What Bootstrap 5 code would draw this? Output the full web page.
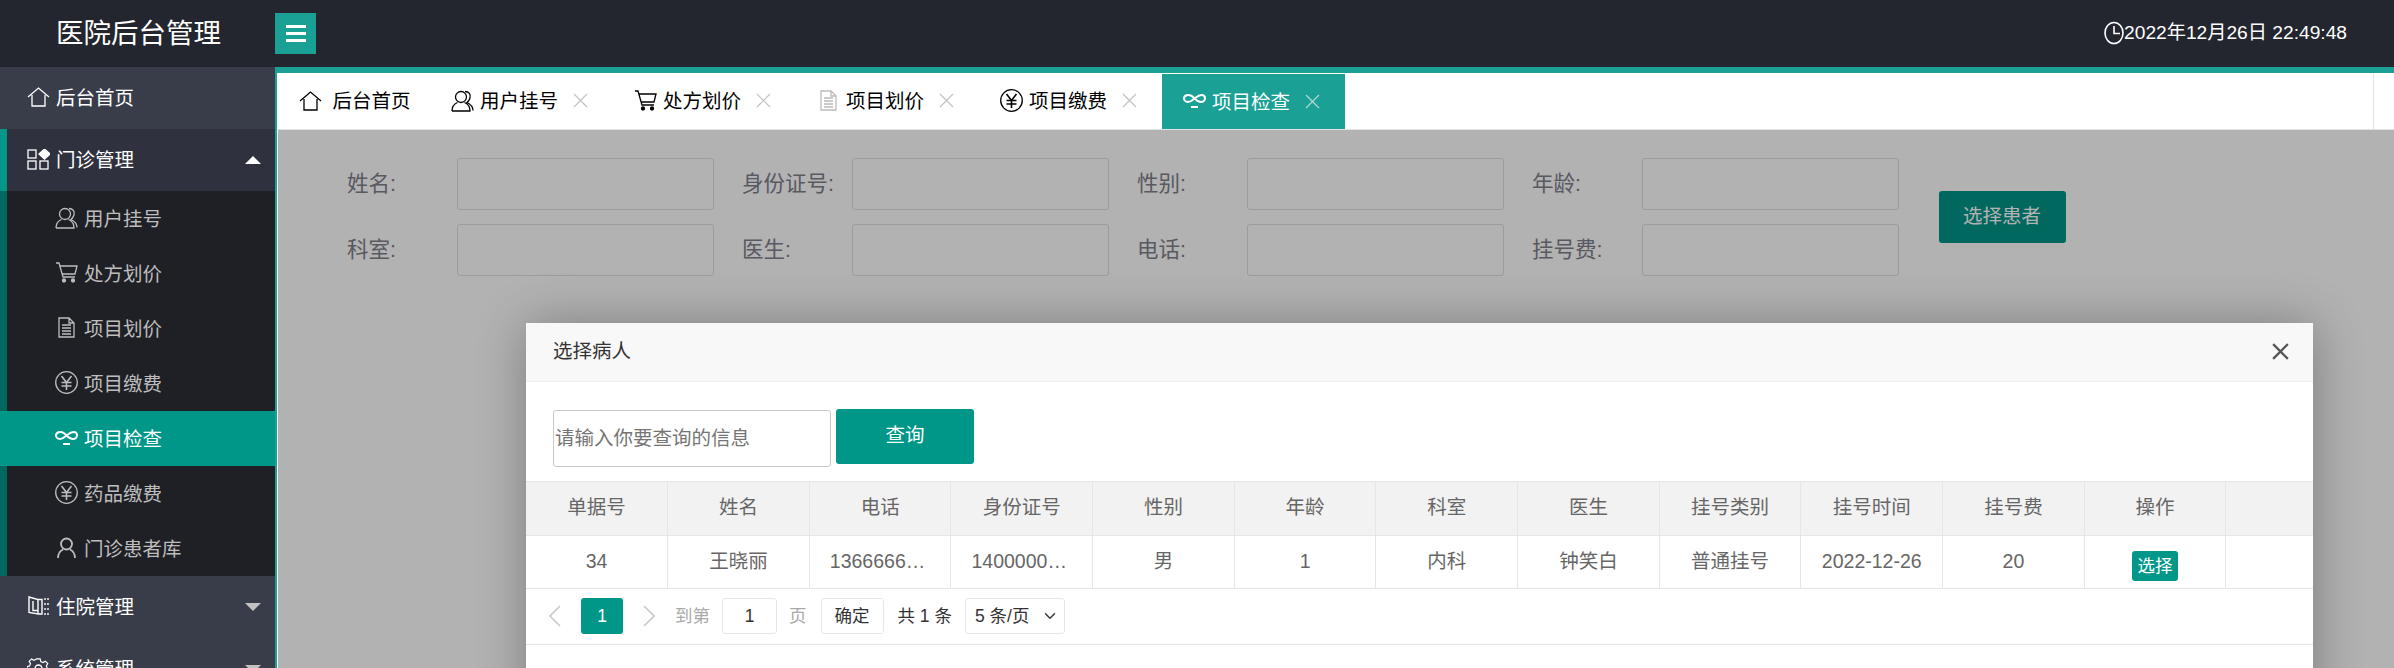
<!DOCTYPE html>
<html lang="zh">
<head>
<meta charset="utf-8">
<title>医院后台管理</title>
<link href="https://cdn.jsdelivr.net/npm/bootstrap@5.3.0/dist/css/bootstrap.min.css" rel="stylesheet">
<style>
html,body{height:100%;overflow:hidden;}
body{font-family:"Liberation Sans","Noto Sans CJK SC",sans-serif;font-size:19.5px;color:#333;background:#fff;}
svg{display:block;flex:none;fill:none;stroke:currentColor;stroke-width:1.3;}
.topbar{height:67px;background:#23262e;color:#fff;}
.brand{width:275px;padding-left:56px;font-size:27.5px;line-height:1;}
.burger{width:41px;height:41px;background:#1aa094;}
.burger span{display:block;width:20px;height:3px;background:#fff;}
.clock{padding-right:47px;font-size:19.2px;}
.shell{height:601px;}
.side{width:275px;background:#393d49;overflow:hidden;color:#fff;}
.side-top{flex:none;height:62px;padding-left:27px;padding-top:2px;color:#fff;}
.side-top svg{margin-right:6px;margin-bottom:4px;}
.side-open{background:#2f323e;border-left:7px solid #009688;padding-left:20px;}
.caret-mark{width:0;height:0;border-left:8px solid transparent;border-right:8px solid transparent;margin-left:auto;margin-right:14px;margin-bottom:2px;}
.caret-up{border-bottom:8px solid #fff;}
.caret-down{border-top:8px solid #c2c2c2;}
.side-sub{flex:none;background:#1f2026;}
.sub-row{height:55px;padding-left:48px;padding-top:2px;border-left:7px solid #00695f;color:#bdbdbd;}
.sub-row svg{margin-right:6px;margin-bottom:4px;}
.sub-row.is-on{background:#009688;border-left-color:#009688;color:#fff;}
.work{flex:1;min-width:0;border-top:6px solid #1aa094;border-left:2px solid #1aa094;background:#fff;}
.tabbar{height:57px;border-bottom:1px solid #e2e2e2;color:#000;}
.tab-cell{height:56px;padding-left:21.5px;padding-top:2px;}
.tab-cell svg{margin-bottom:3px;}
.tab-cell svg.ti{margin-right:6px;}
.tab-home{width:152.5px;}
.tab-home svg.ti{margin-right:11px;}
.tab-item{width:183px;}
.tab-x{margin-left:15px;color:#c2c2c2;stroke-width:1.2;}
.tab-on{width:183px;margin-top:1px;height:55px;background:#1aa094;color:#fff;}
.tab-on .tab-x{color:#b4d9d5;}
.tab-doc{color:#bbb;}
.tab-end{width:21px;margin-left:auto;height:56px;border-left:1px solid #e2e2e2;}
.stage{height:538px;margin-left:1px;overflow:hidden;}
.patient-form{padding:28px 0 0 69px;}
.form-rows{display:flex;flex-direction:column;gap:14px;}
.form-line{display:flex;gap:28.5px;}
.field-pair{display:flex;align-items:center;}
.field-pair label{width:110px;font-size:21.5px;color:#80808a;padding-top:1px;}
.field-pair .form-control{width:256.500px;height:52px;border:1px solid #e0e0e0;border-radius:3px;}
.pick-btn{width:127px;height:52px;margin-left:40px;background:#009688;color:#fff;font-size:19.5px;border-radius:3px;border:0;}
.shade{position:absolute;inset:0;background:rgba(0,0,0,.3);}
.dialog{position:absolute;left:248px;top:192.500px;width:1787px;height:500px;background:#fff;border-radius:2px;box-shadow:1px 1px 50px rgba(0,0,0,.3);}
.dialog-head{height:59px;background:#f8f8f8;border-bottom:1px solid #eee;padding:0 24px 0 27px;color:#333;}
.dialog-close{color:#555;stroke-width:2;}
.search-row{padding:27px 0 17px 27px;height:99px;gap:5px;}
.search-input{width:278px;height:57px;padding:0 1px;margin-top:1px;border:1px solid #c9c9c9;border-radius:3px;font-size:19.5px;}
.search-input::placeholder{color:#757575;}
.search-btn{width:138px;height:55px;background:#009688;color:#fff;font-size:19.5px;border:0;border-radius:3px;}
.grid-table{table-layout:fixed;width:1787px;margin:0;border-color:#e6e6e6;color:#666;font-size:19.5px;}
.grid-table th,.grid-table td{text-align:center;vertical-align:middle;padding:0 20px;font-weight:400;white-space:nowrap;overflow:hidden;text-overflow:ellipsis;border:1px solid #e6e6e6;color:#666;}
.grid-table tr>*:first-child{border-left:0;}
.grid-table tr>*:last-child{border-right:0;}
.grid-table th{height:54px;background:#f2f2f2;}
.grid-table td{height:53px;}
.pick-mini{display:inline-block;width:46px;height:30px;line-height:30px;margin-top:8px;background:#009688;color:#fff;font-size:17.5px;border-radius:3px;padding:0;border:0;}
.pager{height:56px;border-bottom:1px solid #e6e6e6;padding-left:23px;font-size:17.5px;color:#aaa;}
.pager svg{color:#c9c9c9;stroke-width:1.6;}
.pager-now{width:42px;height:36px;margin:0 20px;background:#009688;color:#fff;border-radius:3px;}
.pager-first{margin-left:20px;}
.pager-input{width:55px;height:36px;margin:0 12px;text-align:center;border:1px solid #e6e6e6;border-radius:3px;font-size:17.5px;color:#333;padding:0;}
.pager-ok{width:63px;height:36px;margin:0 14px;padding:0;background:#fff;border:1px solid #e6e6e6;border-radius:3px;font-size:17.5px;color:#333;}
.pager-total{color:#333;}
.pager-select{width:100px;height:36px;margin-left:13px;padding:0 0 0 9px;border:1px solid #e6e6e6;border-radius:3px;font-size:17.5px;color:#333;background-position:right 6px center;}
</style>
</head>
<body>
<svg width="0" height="0" style="position:absolute">
  <defs>
    <symbol id="i-home" viewBox="0 0 23 20"><path d="M1 10 11.500 1 22 10M5 8v11h13V8"/></symbol>
    <symbol id="i-grid" viewBox="0 0 23 21"><rect x="1" y="1" width="8" height="8"/><rect x="1" y="12" width="8" height="8"/><rect x="13" y="12" width="8" height="8"/><path d="M17.500 0 23 5l-5.500 5L12 5Z" fill="currentColor"/></symbol>
    <symbol id="i-users" viewBox="0 0 23 22"><circle cx="10" cy="7" r="5.500"/><path d="M1 21c0-5 2-7 5.500-8.500M13.500 12.500C17 14 19 16 19 21H1M14 1.500c4 0 6 3 5 6.500-.5 2-2 3.500-3 4.500 3 1.500 6 4 6 8"/></symbol>
    <symbol id="i-cart" viewBox="0 0 23 21"><path d="M1 1h3l4 14h12M5 4h17l-2 8H7"/><circle cx="9" cy="18.500" r="1.500" fill="currentColor"/><circle cx="18" cy="18.500" r="1.500" fill="currentColor"/></symbol>
    <symbol id="i-doc" viewBox="0 0 23 21"><path d="M4 1h10l5 5v14H4ZM14 1v5h5M7 8h9M7 11h9M7 14h9M7 17h9"/></symbol>
    <symbol id="i-yen" viewBox="0 0 23 23"><circle cx="11.500" cy="11.500" r="10.800"/><path d="m6.500 5 5 6.500L16.500 5M6.500 11.500h10M6.500 15h10M11.500 11.500V19" stroke-width="1.600"/></symbol>
    <symbol id="i-loop" viewBox="0 0 23 16"><path d="M11.500 5.500C9.500 3 7 1.500 4.500 2 2 2.500 1 4 1 5.500S2.500 9 5 9c3 0 4.500-2 6.500-3.500S15.500 2 18.500 2C21 2 22 3.700 22 5.300S20.500 9 18 9c-2.500 0-4.500-1.500-6.500-3.500" stroke-width="2"/><path d="M8 14h7" stroke-width="2"/></symbol>
    <symbol id="i-user" viewBox="0 0 23 22"><circle cx="11.500" cy="7" r="5.500" stroke-width="1.800"/><path d="M3 21c0-5 2-7 5-8.500M20 21c0-5-2-7-5-8.500" stroke-width="1.800"/></symbol>
    <symbol id="i-ward" viewBox="0 0 23 22"><path d="M2 2 11 4.500V19L2 17.500ZM11 4.500h4V19h-4M6 6v9.500h5M18 3v2M18 8v2M18 13v2M18 18v2M21 3v2M21 8v2M21 13v2M21 18v2" stroke-width="1.400"/></symbol>
    <symbol id="i-gear" viewBox="0 0 23 23"><circle cx="11.500" cy="11.500" r="3.500"/><path d="M9.500 1h4l.7 3 2.500 1 2.600-1.500 2.700 2.800-1.600 2.600 1 2.500 3 .7-1 3.500-2.500.5-1 2.400 1.500 2.600-2.800 2.700-2.600-1.500-2.500 1-.7 3h-4l-.7-3-2.500-1-2.600 1.500L1.300 19 2.800 16.400 1.800 14-1 13.300V9.500l2.800-.7 1-2.500L1.300 3.700 4 1l2.600 1.500L9 1.500Z" transform="translate(1 1) scale(.9)"/></symbol>
    <symbol id="i-x" viewBox="0 0 15 15"><path d="m1 1 13 13M14 1 1 14"/></symbol>
    <symbol id="i-clock" viewBox="0 0 20 24"><ellipse cx="10" cy="12" rx="9" ry="10.500" stroke-width="1.600"/><path d="M10 5v7.500h6" stroke-width="1.600"/></symbol>
  </defs>
</svg>

<header class="topbar d-flex align-items-center">
  <div class="brand">医院后台管理</div>
  <button type="button" class="burger btn p-0 rounded-0 d-flex flex-column justify-content-center align-items-center gap-1" aria-label="菜单"><span></span><span></span><span></span></button>
  <div class="clock ms-auto d-flex align-items-center"><svg width="20" height="24"><use href="#i-clock"/></svg>2022年12月26日 22:49:48</div>
</header>

<div class="shell d-flex">
  <nav class="side nav flex-column flex-nowrap">
    <div class="side-top d-flex align-items-center"><svg width="23" height="20"><use href="#i-home"/></svg>后台首页</div>
    <div class="side-top side-open d-flex align-items-center"><svg width="23" height="21"><use href="#i-grid"/></svg>门诊管理<span class="caret-mark caret-up"></span></div>
    <div class="side-sub">
      <div class="sub-row d-flex align-items-center"><svg width="23" height="22"><use href="#i-users"/></svg>用户挂号</div>
      <div class="sub-row d-flex align-items-center"><svg width="23" height="21"><use href="#i-cart"/></svg>处方划价</div>
      <div class="sub-row d-flex align-items-center"><svg width="23" height="21"><use href="#i-doc"/></svg>项目划价</div>
      <div class="sub-row d-flex align-items-center"><svg width="23" height="23"><use href="#i-yen"/></svg>项目缴费</div>
      <div class="sub-row is-on d-flex align-items-center"><svg width="23" height="16"><use href="#i-loop"/></svg>项目检查</div>
      <div class="sub-row d-flex align-items-center"><svg width="23" height="23"><use href="#i-yen"/></svg>药品缴费</div>
      <div class="sub-row d-flex align-items-center"><svg width="23" height="22"><use href="#i-user"/></svg>门诊患者库</div>
    </div>
    <div class="side-top d-flex align-items-center"><svg width="23" height="22"><use href="#i-ward"/></svg>住院管理<span class="caret-mark caret-down"></span></div>
    <div class="side-top d-flex align-items-center"><svg width="23" height="23"><use href="#i-gear"/></svg>系统管理<span class="caret-mark caret-down"></span></div>
  </nav>

  <main class="work">
    <div class="tabbar d-flex">
      <div class="tab-cell tab-home d-flex align-items-center"><svg class="ti" width="23" height="20"><use href="#i-home"/></svg>后台首页</div>
      <div class="tab-cell tab-item d-flex align-items-center"><svg class="ti" width="23" height="22"><use href="#i-users"/></svg>用户挂号<svg class="tab-x" width="15" height="15"><use href="#i-x"/></svg></div>
      <div class="tab-cell tab-item d-flex align-items-center"><svg class="ti" width="23" height="21"><use href="#i-cart"/></svg>处方划价<svg class="tab-x" width="15" height="15"><use href="#i-x"/></svg></div>
      <div class="tab-cell tab-item d-flex align-items-center"><svg class="ti tab-doc" width="23" height="21"><use href="#i-doc"/></svg>项目划价<svg class="tab-x" width="15" height="15"><use href="#i-x"/></svg></div>
      <div class="tab-cell tab-item d-flex align-items-center"><svg class="ti" width="23" height="23"><use href="#i-yen"/></svg>项目缴费<svg class="tab-x" width="15" height="15"><use href="#i-x"/></svg></div>
      <div class="tab-cell tab-on d-flex align-items-center"><svg class="ti" width="23" height="16"><use href="#i-loop"/></svg>项目检查<svg class="tab-x" width="15" height="15"><use href="#i-x"/></svg></div>
      <div class="tab-end"></div>
    </div>

    <div class="stage position-relative">
      <div class="patient-form d-flex align-items-center">
        <div class="form-rows">
          <div class="form-line">
            <div class="field-pair"><label>姓名:</label><input class="form-control"></div>
            <div class="field-pair"><label>身份证号:</label><input class="form-control"></div>
            <div class="field-pair"><label>性别:</label><input class="form-control"></div>
            <div class="field-pair"><label>年龄:</label><input class="form-control"></div>
          </div>
          <div class="form-line">
            <div class="field-pair"><label>科室:</label><input class="form-control"></div>
            <div class="field-pair"><label>医生:</label><input class="form-control"></div>
            <div class="field-pair"><label>电话:</label><input class="form-control"></div>
            <div class="field-pair"><label>挂号费:</label><input class="form-control"></div>
          </div>
        </div>
        <button type="button" class="pick-btn btn p-0">选择患者</button>
      </div>

      <div class="shade"></div>

      <section class="dialog">
        <div class="dialog-head d-flex align-items-center justify-content-between">
          <span>选择病人</span>
          <svg class="dialog-close" width="17" height="17" viewBox="0 0 15 15"><path d="m1 1 13 13M14 1 1 14"/></svg>
        </div>
        <div class="search-row d-flex align-items-start">
          <input class="search-input" placeholder="请输入你要查询的信息">
          <button type="button" class="search-btn btn p-0">查询</button>
        </div>
        <table class="table table-bordered grid-table">
          <colgroup>
            <col span="12" width="141.67">
            <col>
          </colgroup>
          <thead>
            <tr><th>单据号</th><th>姓名</th><th>电话</th><th>身份证号</th><th>性别</th><th>年龄</th><th>科室</th><th>医生</th><th>挂号类别</th><th>挂号时间</th><th>挂号费</th><th>操作</th><th></th></tr>
          </thead>
          <tbody>
            <tr><td>34</td><td>王晓丽</td><td>13666666666</td><td>140000000000000000</td><td>男</td><td>1</td><td>内科</td><td>钟笑白</td><td>普通挂号</td><td>2022-12-26</td><td>20</td><td class="py-0"><button type="button" class="pick-mini btn">选择</button></td><td></td></tr>
          </tbody>
        </table>
        <div class="pager d-flex align-items-center">
          <svg width="12" height="22" viewBox="0 0 12 22"><path d="M11 1 1 11l10 10"/></svg>
          <span class="pager-now d-flex align-items-center justify-content-center">1</span>
          <svg width="12" height="22" viewBox="0 0 12 22"><path d="m1 1 10 10L1 21"/></svg>
          <span class="pager-first">到第</span>
          <input class="pager-input" value="1">
          <span>页</span>
          <button type="button" class="pager-ok btn">确定</button>
          <span class="pager-total">共 1 条</span>
          <select class="pager-select form-select"><option>5 条/页</option></select>
        </div>
      </section>
    </div>
  </main>
</div>
<script src="https://cdn.jsdelivr.net/npm/bootstrap@5.3.0/dist/js/bootstrap.bundle.min.js"></script>
</body>
</html>
